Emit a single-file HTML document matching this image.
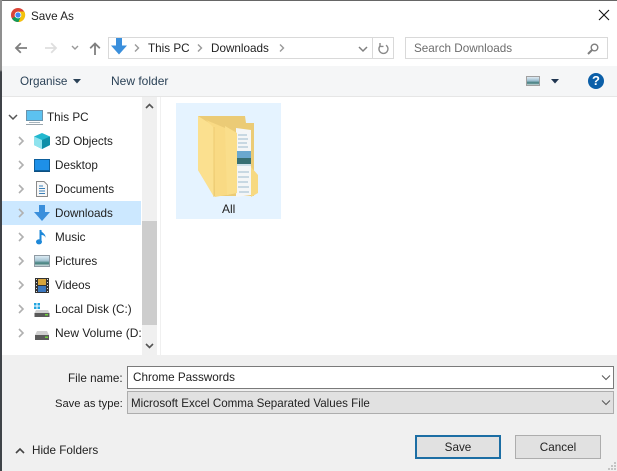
<!DOCTYPE html>
<html><head><meta charset="utf-8">
<style>
html,body{margin:0;padding:0}
body{width:617px;height:471px;overflow:hidden;background:#fff;font-family:"Liberation Sans",sans-serif;font-size:11.7px;color:#222;position:relative}
.a{position:absolute}
.t{position:absolute;white-space:nowrap;line-height:16px;margin-top:1px}
svg{position:absolute;overflow:visible}
</style></head><body>
<div class="a" style="left:0;top:0;width:617px;height:1px;background:#666"></div>
<div class="a" style="left:0;top:0;width:2px;height:471px;background:linear-gradient(#8f8f8f 0,#8f8f8f 70px,#3f4348 72px,#3f4348 100%)"></div>

<!-- title -->
<svg style="left:11px;top:8px" width="14" height="14" viewBox="0 0 14 14">
<circle cx="7" cy="7" r="7" fill="#db4437"/>
<path d="M7 7L1 10.5A7 7 0 0 0 7.5 14L11 7Z" fill="#0f9d58"/>
<path d="M7 3.5H13.3A7 7 0 0 1 7.5 14L10.5 7Z" fill="#f4c20d"/>
<circle cx="7" cy="7" r="3.4" fill="#fff"/><circle cx="7" cy="7" r="2.6" fill="#4285f4"/>
</svg>
<div class="t" style="left:31px;top:8px">Save As</div>
<svg style="left:599px;top:10px" width="10" height="10"><path d="M0 0L10 10M10 0L0 10" stroke="#111" stroke-width="1.1" fill="none"/></svg>

<!-- nav buttons -->
<svg style="left:14px;top:41px" width="14" height="14"><path d="M13 7H2.5M6.8 2.2L2 7L6.8 11.8" stroke="#7f7f7f" stroke-width="1.8" fill="none"/></svg>
<svg style="left:44px;top:41px" width="14" height="14"><path d="M1 7H11.5M7.2 2.2L12 7L7.2 11.8" stroke="#dedede" stroke-width="1.8" fill="none"/></svg>
<svg style="left:71px;top:45px" width="8" height="6"><path d="M1 1L4 4L7 1" stroke="#999" stroke-width="1.4" fill="none"/></svg>
<svg style="left:88px;top:41px" width="14" height="14"><path d="M7 14V2.5M2.2 7.3L7 2.5L11.8 7.3" stroke="#7f7f7f" stroke-width="1.8" fill="none"/></svg>

<!-- address -->
<div class="a" style="left:108px;top:37px;width:284px;height:20px;border:1px solid #d9d9d9"></div>
<div class="a" style="left:372px;top:38px;width:1px;height:20px;background:#d9d9d9"></div>
<svg style="left:111px;top:38px" width="16" height="17"><path d="M5 0H11V7.5H16L8 16.5L0 7.5H5Z" fill="#3a8fdc"/></svg>
<svg style="left:134px;top:44px" width="6" height="8"><path d="M1 .5L4.5 4L1 7.5" stroke="#999" stroke-width="1.4" fill="none"/></svg>
<div class="t" style="left:148px;top:40px">This PC</div>
<svg style="left:197px;top:44px" width="6" height="8"><path d="M1 .5L4.5 4L1 7.5" stroke="#999" stroke-width="1.4" fill="none"/></svg>
<div class="t" style="left:211px;top:40px">Downloads</div>
<svg style="left:279px;top:44px" width="6" height="8"><path d="M1 .5L4.5 4L1 7.5" stroke="#999" stroke-width="1.4" fill="none"/></svg>
<svg style="left:358px;top:46px" width="10" height="7"><path d="M1 1L5 5L9 1" stroke="#7f7f7f" stroke-width="1.5" fill="none"/></svg>
<svg style="left:378px;top:43px" width="11" height="12"><path d="M2.5 2.5A4.5 4.5 0 1 0 8 2.2M2 0V3.4H5.5" stroke="#8a8a8a" stroke-width="1.4" fill="none"/></svg>

<!-- search -->
<div class="a" style="left:405px;top:37px;width:201px;height:20px;border:1px solid #d9d9d9"></div>
<div class="t" style="left:414px;top:40px;color:#6d6d6d">Search Downloads</div>
<svg style="left:587px;top:43px" width="12" height="12"><circle cx="7.5" cy="4.5" r="3.3" stroke="#7f7f7f" stroke-width="1.4" fill="none"/><path d="M5 7L1 11" stroke="#7f7f7f" stroke-width="2" fill="none"/></svg>

<!-- command bar -->
<div class="a" style="left:2px;top:66px;width:615px;height:30px;background:#f5f6f7;border-bottom:1px solid #e6e6e6"></div>
<div class="t" style="left:20px;top:73px;color:#2b4257">Organise</div>
<svg style="left:73px;top:79px" width="8" height="5"><path d="M0 0H8L4 4.5Z" fill="#2b4257"/></svg>
<div class="t" style="left:111px;top:73px;color:#2b4257;font-size:12px;margin-top:0">New folder</div>
<div class="a" style="left:526px;top:76px;width:12px;height:8px;border:1px solid #a0a0a0;background:linear-gradient(#dfeaf2 0,#9fc0d2 45%,#3f7a7a 75%,#cfdde0 100%)"></div>
<svg style="left:551px;top:79px" width="8" height="5"><path d="M0 0H8L4 4.5Z" fill="#1f3550"/></svg>
<div class="a" style="left:588px;top:73px;width:16px;height:16px;border-radius:50%;background:#0b5fa8;color:#fff;font-weight:bold;font-size:13px;line-height:16px;text-align:center">?</div>

<!-- nav pane -->
<div class="a" style="left:2px;top:201px;width:139px;height:24px;background:#cce8ff"></div>
<div class="a" style="left:142px;top:97px;width:15px;height:258px;background:#f0f0f0"></div>
<div class="a" style="left:142px;top:221px;width:15px;height:104px;background:#cdcdcd"></div>
<svg style="left:145px;top:103px" width="9" height="6"><path d="M1 5L4.5 1.5L8 5" stroke="#555" stroke-width="1.6" fill="none"/></svg>
<svg style="left:145px;top:343px" width="9" height="6"><path d="M1 1L4.5 4.5L8 1" stroke="#555" stroke-width="1.6" fill="none"/></svg>
<div class="a" style="left:160px;top:97px;width:1px;height:258px;background:#f0f0f0"></div>

<svg style="left:8px;top:114px" width="10" height="7"><path d="M1 1L5 5L9 1" stroke="#555" stroke-width="1.5" fill="none"/></svg>
<svg style="left:26px;top:110px" width="17" height="15"><rect x=".5" y=".5" width="16" height="10" fill="#5cc2f0" stroke="#6b93ab"/><rect x="3" y="12" width="11" height="1" fill="#a8b4bc"/><rect x="0" y="14" width="17" height="1" fill="#9aa5ad"/></svg>
<div class="t" style="left:47px;top:109px">This PC</div>

<svg style="left:18px;top:136px" width="6" height="10"><path d="M1 1L5 5L1 9" stroke="#b0b0b0" stroke-width="1.6" fill="none"/></svg>
<svg style="left:34px;top:133px" width="16" height="16"><path d="M8 0L16 3.5V12L8 16L0 12V3.5Z" fill="#22b8cf"/><path d="M0 3.5L8 7V16L0 12Z" fill="#8fe3ee"/><path d="M8 7L16 3.5V12L8 16Z" fill="#0f8fa8"/></svg>
<div class="t" style="left:55px;top:133px">3D Objects</div>

<svg style="left:18px;top:160px" width="6" height="10"><path d="M1 1L5 5L1 9" stroke="#b0b0b0" stroke-width="1.6" fill="none"/></svg>
<svg style="left:34px;top:159px" width="16" height="13"><rect x=".5" y=".5" width="15" height="11" fill="#1e90e8" stroke="#0d5f9c"/><rect y="12" width="16" height="1" fill="#0d4f80"/></svg>
<div class="t" style="left:55px;top:157px">Desktop</div>

<svg style="left:18px;top:184px" width="6" height="10"><path d="M1 1L5 5L1 9" stroke="#b0b0b0" stroke-width="1.6" fill="none"/></svg>
<svg style="left:36px;top:181px" width="12" height="16"><path d="M.5.5H8L11.5 4V15.5H.5Z" fill="#f7f7f7" stroke="#8a8a8a"/><path d="M3 5H7M3 7.5H9M3 10H9M3 12.5H9" stroke="#3c80b8" stroke-width="1"/></svg>
<div class="t" style="left:55px;top:181px">Documents</div>

<svg style="left:18px;top:208px" width="6" height="10"><path d="M1 1L5 5L1 9" stroke="#b0b0b0" stroke-width="1.6" fill="none"/></svg>
<svg style="left:34px;top:205px" width="16" height="16"><path d="M5 0H11V7H16L8 16L0 7H5Z" fill="#3a8fdc"/></svg>
<div class="t" style="left:55px;top:205px">Downloads</div>

<svg style="left:18px;top:232px" width="6" height="10"><path d="M1 1L5 5L1 9" stroke="#b0b0b0" stroke-width="1.6" fill="none"/></svg>
<svg style="left:36px;top:229px" width="12" height="16"><path d="M4.5 1V12" stroke="#1e88d8" stroke-width="2" fill="none"/><ellipse cx="3" cy="12.8" rx="3" ry="2.6" fill="#1e88d8"/><path d="M4.5 0C5 4 10 4 9.5 9C9 6.5 7 6 5 6Z" fill="#1e88d8"/></svg>
<div class="t" style="left:55px;top:229px">Music</div>

<svg style="left:18px;top:256px" width="6" height="10"><path d="M1 1L5 5L1 9" stroke="#b0b0b0" stroke-width="1.6" fill="none"/></svg>
<div class="a" style="left:34px;top:255px;width:14px;height:10px;border:1px solid #8f9aa3;background:linear-gradient(#dcebf3 0,#a9c7d6 45%,#3f7d7a 72%,#d5e0e2 100%)"></div>
<div class="t" style="left:55px;top:253px">Pictures</div>

<svg style="left:18px;top:280px" width="6" height="10"><path d="M1 1L5 5L1 9" stroke="#b0b0b0" stroke-width="1.6" fill="none"/></svg>
<svg style="left:35px;top:278px" width="14" height="15"><rect width="14" height="15" fill="#333"/><rect x="3" y="1" width="8" height="6" fill="#d7a53c"/><rect x="3" y="8" width="8" height="6" fill="#3c78c0"/><path d="M1 1.5h1M1 4.5h1M1 7.5h1M1 10.5h1M1 13.5h1M12 1.5h1M12 4.5h1M12 7.5h1M12 10.5h1M12 13.5h1" stroke="#ddd"/></svg>
<div class="t" style="left:55px;top:277px">Videos</div>

<svg style="left:18px;top:304px" width="6" height="10"><path d="M1 1L5 5L1 9" stroke="#b0b0b0" stroke-width="1.6" fill="none"/></svg>
<svg style="left:34px;top:303px" width="16" height="14"><path d="M0 0h2.5v2.5H0zM3.5 0H6v2.5H3.5zM0 3.5h2.5V6H0zM3.5 3.5H6V6H3.5z" fill="#22a5e0"/><path d="M2 7H14L15.5 10H.5Z" fill="#d0d0d0"/><rect x=".5" y="10" width="15" height="4" fill="#5a5a5a"/><rect x="11" y="11" width="3" height="1.5" fill="#6fd13c"/></svg>
<div class="t" style="left:55px;top:301px">Local Disk (C:)</div>

<svg style="left:18px;top:328px" width="6" height="10"><path d="M1 1L5 5L1 9" stroke="#b0b0b0" stroke-width="1.6" fill="none"/></svg>
<svg style="left:35px;top:331px" width="14" height="9"><path d="M2 0H12L14 4H0Z" fill="#d0d0d0"/><rect y="4" width="14" height="5" fill="#5a5a5a"/><rect x="10" y="5.5" width="3" height="1.5" fill="#6fd13c"/></svg>
<div class="a" style="left:55px;top:325px;width:87px;height:16px;overflow:hidden"><div class="t" style="left:0;top:0;font-size:12px;margin-top:0">New Volume (D:)</div></div>

<!-- folder tile -->
<div class="a" style="left:176px;top:103px;width:105px;height:116px;background:#e5f3ff"></div>
<svg style="left:192px;top:110px" width="72" height="92" viewBox="0 0 72 92">
<path d="M6 6H53L54 13H62V86H22L6 60Z" fill="#ebcb76"/>
<path d="M44 18L59 20V85L44 87Z" fill="#f4f6f7"/>
<path d="M46 25H55M46 29H56M46 33H55M46 37H56M46 62H57M46 67H57M46 72H56M46 77H57M47 82H57" stroke="#9cb9cc" stroke-width="1"/>
<rect x="45" y="41" width="14" height="7" fill="#6aa8cf"/>
<rect x="45" y="48" width="14" height="6" fill="#376f72"/>
<rect x="45" y="54" width="14" height="2" fill="#cfe0e8"/>
<path d="M59 57L66 65V83L59 87Z" fill="#f7d981"/>
<path d="M6 6L22 16V87L6 60Z" fill="#fbe08f"/>
<path d="M14 10L45 23V83L23 87L22 18Z" fill="#f9da84"/>
<path d="M33 16L45 23V83L35 85Z" fill="#fade8b"/>
<path d="M22 17V87" stroke="#eecb72" stroke-width="1"/>
</svg>
<div class="t" style="left:222px;top:201px;font-size:12px;margin-top:0">All</div>

<!-- bottom panel -->
<div class="a" style="left:2px;top:355px;width:615px;height:116px;background:#f0f0f0"></div>
<div class="t" style="left:68px;top:370px">File name:</div>
<div class="a" style="left:127px;top:366px;width:485px;height:21px;background:#fff;border:1px solid #7a7a7a"></div>
<div class="t" style="left:133px;top:369px">Chrome Passwords</div>
<svg style="left:601px;top:375px" width="10" height="6"><path d="M1 .5L5 4.5L9 .5" stroke="#555" stroke-width="1" fill="none"/></svg>
<div class="t" style="left:55px;top:395px;font-size:11.2px">Save as type:</div>
<div class="a" style="left:127px;top:391px;width:485px;height:21px;background:#e1e1e1;border:1px solid #adadad"></div>
<div class="t" style="left:131px;top:395px;font-size:11.6px">Microsoft Excel Comma Separated Values File</div>
<svg style="left:601px;top:400px" width="10" height="6"><path d="M1 .5L5 4.5L9 .5" stroke="#555" stroke-width="1" fill="none"/></svg>

<svg style="left:15px;top:447px" width="10" height="7"><path d="M1 6L5 2L9 6" stroke="#444" stroke-width="1.6" fill="none"/></svg>
<div class="t" style="left:32px;top:442px">Hide Folders</div>

<div class="a" style="left:415px;top:435px;width:82px;height:20px;background:#e1e1e1;border:2px solid #1c6ea4;text-align:center;line-height:22px">Save</div>
<div class="a" style="left:515px;top:435px;width:84px;height:22px;background:#e1e1e1;border:1px solid #adadad;text-align:center;line-height:24px">Cancel</div>
<svg style="left:607px;top:461px" width="10" height="10"><path d="M7 1h2v2H7zM4 4h2v2H4zM7 4h2v2H7zM1 7h2v2H1zM4 7h2v2H4zM7 7h2v2H7z" fill="#c4c4c4"/></svg>
</body></html>
